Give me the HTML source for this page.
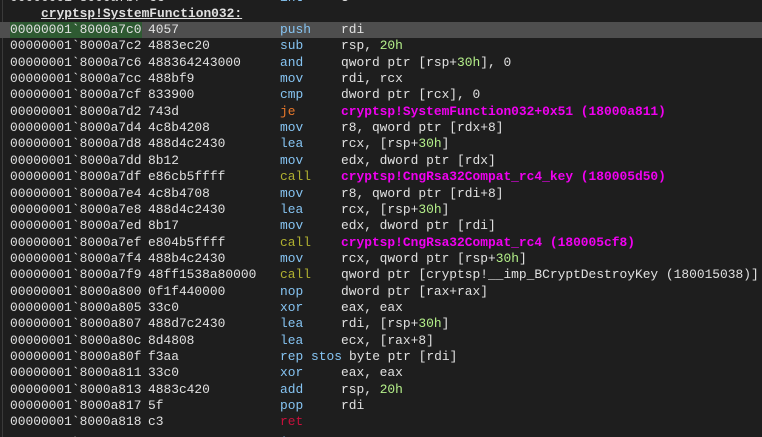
<!DOCTYPE html><html style="overflow:hidden;height:437px"><head><style>
body{margin:0;width:762px;height:437px;background:#1e1e1e;overflow:hidden;position:relative;font-family:"Liberation Mono",monospace;font-size:12.9px;color:#e0e0e0}
.r{position:absolute;left:0;width:762px;height:16.35px;line-height:16.35px;white-space:pre}
.r span{position:absolute;top:0}
.a{left:10px}.b{left:148px}.m{left:280px;color:#86c4f2}.o{left:341px}
.c{color:#b0b030!important}.j{color:#e8782a!important}.t{color:#c8103c!important}
.hl{background:#4e4e4e}.hl .a{background:#2e5a32}
.bd{position:absolute;left:2px;top:0;width:1px;height:437px;background:#3a3a3a}
.o b{position:static;font-weight:normal}.r b.g{color:#b5f08a}.r b.p{color:#f000f0;font-weight:bold}
</style></head><body>
<div class="bd"></div>
<div class="r" style="top:-10px"><span class="a">00000001`8000a7bf cc</span><span class="m">int</span><span class="o">3</span></div>
<div class="r" style="top:6px"><span style="left:41px;text-decoration:underline;font-weight:bold">cryptsp!SystemFunction032:</span></div>
<div id="rows"></div>
<script>
var d=[
["00000001`8000a7c0","4057","push","rdi"],
["00000001`8000a7c2","4883ec20","sub","rsp, <i class=g>20h</i>"],
["00000001`8000a7c6","488364243000","and","qword ptr [rsp+<i class=g>30h</i>], 0"],
["00000001`8000a7cc","488bf9","mov","rdi, rcx"],
["00000001`8000a7cf","833900","cmp","dword ptr [rcx], 0"],
["00000001`8000a7d2","743d","je","<i class=p>cryptsp!SystemFunction032+0x51 (18000a811)</i>","j"],
["00000001`8000a7d4","4c8b4208","mov","r8, qword ptr [rdx+8]"],
["00000001`8000a7d8","488d4c2430","lea","rcx, [rsp+<i class=g>30h</i>]"],
["00000001`8000a7dd","8b12","mov","edx, dword ptr [rdx]"],
["00000001`8000a7df","e86cb5ffff","call","<i class=p>cryptsp!CngRsa32Compat_rc4_key (180005d50)</i>","c"],
["00000001`8000a7e4","4c8b4708","mov","r8, qword ptr [rdi+8]"],
["00000001`8000a7e8","488d4c2430","lea","rcx, [rsp+<i class=g>30h</i>]"],
["00000001`8000a7ed","8b17","mov","edx, dword ptr [rdi]"],
["00000001`8000a7ef","e804b5ffff","call","<i class=p>cryptsp!CngRsa32Compat_rc4 (180005cf8)</i>","c"],
["00000001`8000a7f4","488b4c2430","mov","rcx, qword ptr [rsp+<i class=g>30h</i>]"],
["00000001`8000a7f9","48ff1538a80000","call","qword ptr [cryptsp!__imp_BCryptDestroyKey (180015038)]","c"],
["00000001`8000a800","0f1f440000","nop","dword ptr [rax+rax]"],
["00000001`8000a805","33c0","xor","eax, eax"],
["00000001`8000a807","488d7c2430","lea","rdi, [rsp+<i class=g>30h</i>]"],
["00000001`8000a80c","8d4808","lea","ecx, [rax+8]"],
["00000001`8000a80f","f3aa","rep stos","byte ptr [rdi]","x"],
["00000001`8000a811","33c0","xor","eax, eax"],
["00000001`8000a813","4883c420","add","rsp, <i class=g>20h</i>"],
["00000001`8000a817","5f","pop","rdi"],
["00000001`8000a818","c3","ret","","t"],
["00000001`8000a819","cc","int","3"]];
var h="";
d.forEach(function(e,i){
var top=22+i*16.35;
if(i==25)top+=4;
var mc=e[4]&&e[4]!="x"?" "+e[4]:"";
if(e[4]=="x"){h+='<div class="r" style="top:'+top+'px"><span class="a">'+e[0]+'</span><span class="b">'+e[1]+'</span><span class="m">rep</span><span style="left:311px;color:#86c4f2">stos</span><span style="left:349px">'+e[3]+'</span></div>';return;}
h+='<div class="r'+(i==0?' hl':'')+'" style="top:'+top+'px"><span class="a">'+e[0]+'</span><span class="b">'+e[1]+'</span><span class="m'+mc+'">'+e[2]+'</span><span class="o">'+e[3].replace(/<i /g,'<b ').replace(/<\/i>/g,'</b>')+'</span></div>';
});
document.getElementById("rows").innerHTML=h;
</script>
</body></html>
